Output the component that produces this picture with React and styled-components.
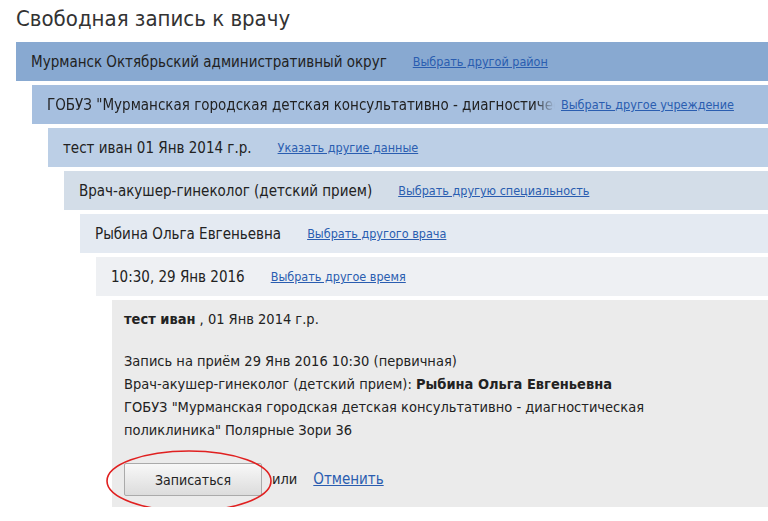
import React from 'react';
import styled, { createGlobalStyle } from 'styled-components';

const Global = createGlobalStyle`
  body { margin: 0; background: #fff; font-family: "DejaVu Sans Condensed", "DejaVu Sans", sans-serif; color: #222; }
`;

const Page = styled.div`
  padding: 4px 0 0 16px;
  width: 752px;
`;

const Title = styled.h1`
  margin: 0 0 9px;
  font-weight: normal;
  font-size: 22px;
  line-height: 29px;
  color: #333;
`;

const Level = styled.div`
  display: flex;
  flex-direction: column;
  gap: 4px;
`;

const Nested = styled.div`
  margin-left: 16px;
`;

const Row = styled.div`
  height: 39px;
  background: ${p => p.$bg};
  display: flex;
  align-items: center;
  padding-left: 15px;
  font-size: 15px;
  white-space: nowrap;
  overflow: hidden;
`;

const Label = styled.span`
  flex-shrink: 0;
  margin-right: 26px;
  ${p => p.$clip && `max-width: 508px; overflow: hidden; margin-right: 6px;
    -webkit-mask-image: linear-gradient(to right, #000 96%, transparent);`}
`;

const Link = styled.a`
  color: #2a5db0;
  text-decoration: underline;
  font-size: 12.5px;
  cursor: pointer;
`;

const Panel = styled.div`
  position: relative;
  background: #ebebeb;
  padding: 8px 12px 11px 12px;
  font-size: 14.5px;
  line-height: 23px;
`;

const Bold = styled.b`
  font-weight: bold;
`;

const Spacer = styled.div`
  height: 19px;
`;

const Actions = styled.div`
  display: flex;
  align-items: center;
  gap: 10px;
  margin-top: 21px;
`;

const Button = styled.button`
  width: 138px;
  height: 33px;
  border: 1px solid #aaa;
  border-radius: 2px;
  background: linear-gradient(#f8f8f8, #dcdcdc);
  font-family: inherit;
  font-size: 14px;
  color: #222;
`;

const Cancel = styled.a`
  color: #2a5db0;
  text-decoration: underline;
  font-size: 15px;
  margin-left: 6px;
`;

const Ellipse = styled.svg`
  position: absolute;
  left: -8px;
  top: 148px;
  pointer-events: none;
`;

const rows = [
  ['#88a9d1', 'Мурманск Октябрьский административный округ', 'Выбрать другой район'],
  ['#a6bfdf', 'ГОБУЗ "Мурманская городская детская консультативно - диагностическая поликлиника"', 'Выбрать другое учреждение', true],
  ['#bccfe6', 'тест иван 01 Янв 2014 г.р.', 'Указать другие данные'],
  ['#d3dde8', 'Врач-акушер-гинеколог (детский прием)', 'Выбрать другую специальность'],
  ['#e4eaf2', 'Рыбина Ольга Евгеньевна', 'Выбрать другого врача'],
  ['#eef0f3', '10:30, 29 Янв 2016', 'Выбрать другое время'],
];

const Tree = ({ i }) => {
  if (i === rows.length) {
    return (
      <Panel>
        <Bold>тест иван</Bold> , 01 Янв 2014 г.р.
        <Spacer />
        <div>Запись на приём 29 Янв 2016 10:30 (первичная)</div>
        <div>Врач-акушер-гинеколог (детский прием): <Bold>Рыбина Ольга Евгеньевна</Bold></div>
        <div>ГОБУЗ "Мурманская городская детская консультативно - диагностическая<br />поликлиника" Полярные Зори 36</div>
        <Actions>
          <Button>Записаться</Button>
          <span>или</span>
          <Cancel>Отменить</Cancel>
        </Actions>
        <Ellipse width="170" height="66" viewBox="0 0 170 66">
          <ellipse cx="85" cy="33" rx="82" ry="30" fill="none" stroke="#e02020" strokeWidth="1.6" />
        </Ellipse>
      </Panel>
    );
  }
  const [bg, label, link, clip] = rows[i];
  return (
    <Level>
      <Row $bg={bg}>
        <Label $clip={clip}>{label}</Label>
        <Link>{link}</Link>
      </Row>
      <Nested>
        <Tree i={i + 1} />
      </Nested>
    </Level>
  );
};

export default function App() {
  return (
    <Page>
      <Global />
      <Title>Свободная запись к врачу</Title>
      <Tree i={0} />
    </Page>
  );
}
